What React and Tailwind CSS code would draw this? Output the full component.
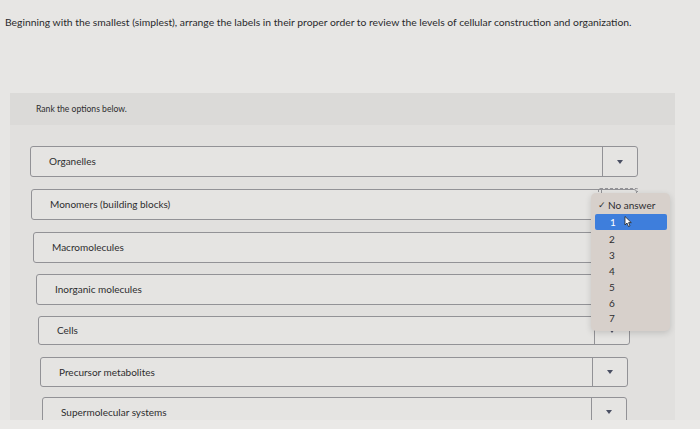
import React from 'react';

const rows = [
  { label: 'Organelles', ml: 'ml-[20px]', w: 'w-[608px]', mt: 'mt-[21px]', h: 'h-[31px]' },
  { label: 'Monomers (building blocks)', ml: 'ml-[21px]', w: 'w-[606px]', mt: 'mt-[12px]', h: 'h-[31px]' },
  { label: 'Macromolecules', ml: 'ml-[23px]', w: 'w-[603px]', mt: 'mt-[12px]', h: 'h-[31px]' },
  { label: 'Inorganic molecules', ml: 'ml-[26px]', w: 'w-[598px]', mt: 'mt-[11px]', h: 'h-[31px]' },
  { label: 'Cells', ml: 'ml-[28px]', w: 'w-[592px]', mt: 'mt-[11px]', h: 'h-[29px]' },
  { label: 'Precursor metabolites', ml: 'ml-[30px]', w: 'w-[588px]', mt: 'mt-[12px]', h: 'h-[30px]' },
  { label: 'Supermolecular systems', ml: 'ml-[32px]', w: 'w-[585px]', mt: 'mt-[10px]', h: 'h-[30px]' },
];

const Arrow = () => (
  <svg width="6" height="4" viewBox="0 0 6 4">
    <path d="M0 0 L6 0 L3 4 Z" fill="#4a4f63" />
  </svg>
);

const RankRow = ({ label, ml, w, mt, h }) => (
  <div className={`${ml} ${w} ${mt} ${h} flex shrink-0 rounded-[3px] border border-[#929296] bg-[#e5e4e2]`}>
    <div className="flex flex-1 items-center pl-[18px] text-[10px] text-[#2d2d2f]">{label}</div>
    <div className="flex w-[35px] items-center justify-center border-l border-[#929296]">
      <Arrow />
    </div>
  </div>
);

export default function App() {
  return (
    <div
      className="relative h-[429px] w-[700px] overflow-hidden bg-[#e7e6e4]"
      style={{ fontFamily: 'Lato, "Open Sans", sans-serif' }}
    >
      <p className="pl-[5px] pt-[15px] text-[10.35px] leading-[15px] text-[#2a2a2c]">
        Beginning with the smallest (simplest), arrange the labels in their proper order to review the levels of
        cellular construction and organization.
      </p>

      <div className="ml-[10px] mt-[63px] flex h-[327px] w-[665px] flex-col overflow-hidden bg-[#e1e0de]">
        <div className="flex h-[32px] shrink-0 items-center bg-[#dbdad8] pl-[26px] text-[8.6px] text-[#2d2d2f]">
          Rank the options below.
        </div>
        {rows.map((r) => (
          <RankRow key={r.label} {...r} />
        ))}
      </div>
      <div className="h-[9px] bg-[#eae9e7]" />

      {/* native select popup */}
      <div className="absolute left-[598px] top-[188px] h-[4px] w-[40px] rounded-t-[2px] border-x border-t border-dashed border-[#929296]" />
      <div className="absolute left-[591px] top-[193px] w-[79px] rounded-[5px] bg-[#d7d0cb] pb-[4px] pt-[4px] text-[10px] text-[#2d2d2f] shadow-[0_2px_6px_rgba(0,0,0,0.15)]">
        <div className="flex h-[16px] items-center pl-[7px]">
          <span className="mr-[2px] text-[9px]">✓</span>
          No answer
        </div>
        <div className="relative ml-[4px] mr-[3px] mt-[1px] flex h-[16px] items-center rounded-[2px] bg-[#3e7edc] pl-[15px] text-white">
          1
          <svg className="absolute left-[29px] top-[2px]" width="8" height="11" viewBox="0 0 8 11">
            <path d="M1 0.5 L1 9 L3 7 L4.5 10.5 L6 9.8 L4.6 6.6 L7.3 6.6 Z" fill="#fff" stroke="#222" strokeWidth="0.8" />
          </svg>
        </div>
        <div className="mt-[2px]">
          {['2', '3', '4', '5', '6', '7'].map((n) => (
            <div key={n} className="flex h-[15.8px] items-center pl-[18px]">
              {n}
            </div>
          ))}
        </div>
      </div>
    </div>
  );
}
